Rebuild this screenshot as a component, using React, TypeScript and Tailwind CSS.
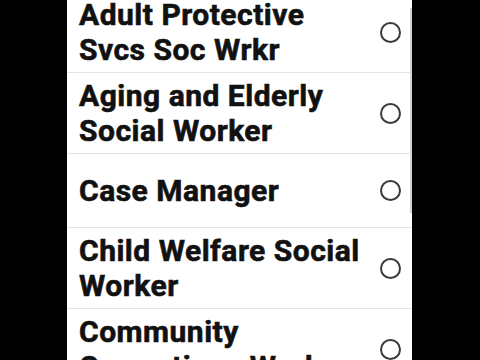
import React from "react";

const ITEMS = [
  "Adult Protective Svcs Soc Wrkr",
  "Aging and Elderly Social Worker",
  "Case Manager",
  "Child Welfare Social Worker",
  "Community Corrections Worker",
];

function Row({ label }: { label: string }) {
  return (
    <div className="flex min-h-[74px] items-center justify-between border-b border-[#e4e4e4] py-[5px] pl-[12px] pr-[11px]">
      <span className="max-w-[284px] text-[30px] font-bold leading-[35px] tracking-[0.5px] text-[#111111] [-webkit-text-stroke:0.6px_#111111]">
        {label}
      </span>
      <span className="h-[21px] w-[21px] flex-none rounded-full border-2 border-[#3a3a3a]" />
    </div>
  );
}

export default function App() {
  return (
    <div
      className="flex h-[360px] w-[480px] justify-center overflow-hidden bg-black"
      style={{ fontFamily: "Roboto, 'Liberation Sans', sans-serif" }}
    >
      <div className="relative ml-[-1px] h-full w-[345px] overflow-hidden bg-white">
        <div className="-mt-[8px]">
          {ITEMS.map((it) => (
            <Row key={it} label={it} />
          ))}
        </div>
        {/* scrollbar thumb */}
        <div className="absolute right-0 top-[8px] h-[205px] w-[2px] bg-[#d4d4d4]" />
      </div>
    </div>
  );
}
